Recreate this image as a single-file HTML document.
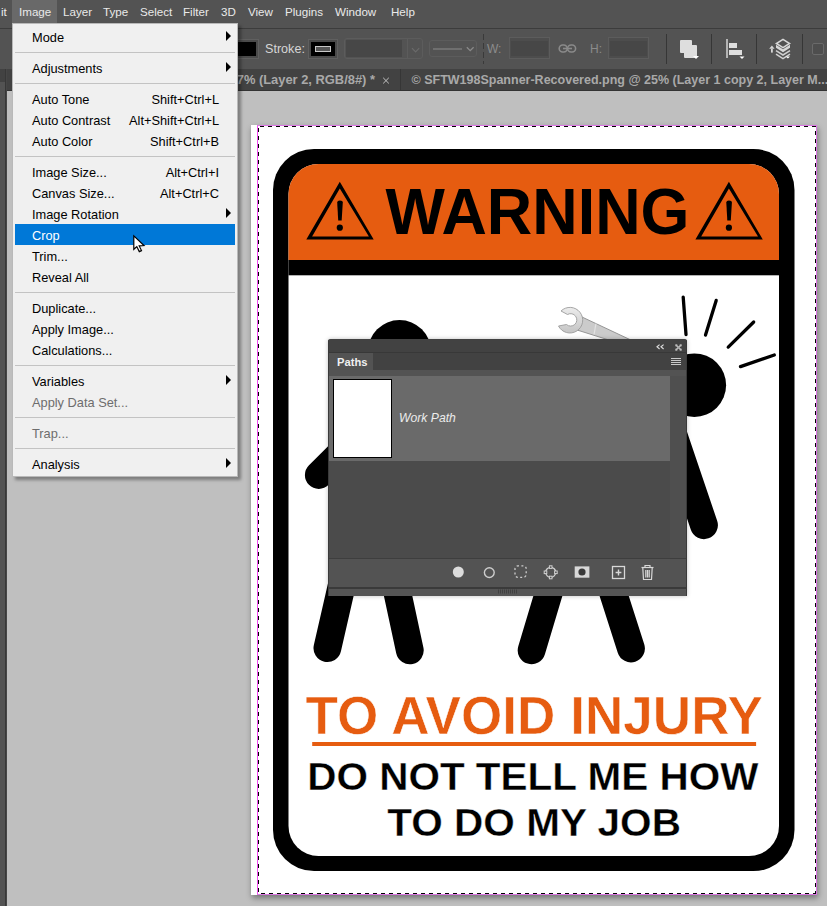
<!DOCTYPE html>
<html><head><meta charset="utf-8">
<style>
*{margin:0;padding:0;box-sizing:border-box}
html,body{width:827px;height:906px;overflow:hidden;background:#bfbfbf;font-family:"Liberation Sans",sans-serif}
.a{position:absolute}
#menubar{left:0;top:0;width:827px;height:28px;background:#535353}
#menubar span{position:absolute;top:5px;font-size:11.6px;color:#eaeaea;line-height:14px;white-space:nowrap}
#mline{left:0;top:28px;width:827px;height:1px;background:#3c3c3c}
#opts{left:0;top:29px;width:827px;height:40px;background:#535353}
#tabs{left:0;top:69px;width:827px;height:22px;background:#424242}
#tabs span{position:absolute;top:4px;font-size:12.5px;font-weight:bold;color:#a9a9a9;white-space:nowrap;line-height:14px}
#lefttool{left:0;top:69px;width:5px;height:837px;background:linear-gradient(#424242 0 13px,#535353 13px)}
#lefttool2{left:5px;top:69px;width:2px;height:837px;background:linear-gradient(90deg,#383838 0 1px,#474747 1px)}
#menu{left:12px;top:23px;width:226px;height:454px;background:#f0f0f0;border:1px solid #b9b9b9;box-shadow:3px 3px 3px rgba(0,0,0,0.35)}
.mi{position:absolute;left:19px;font-size:12.8px;color:#000;line-height:15px;white-space:nowrap}
.sc{position:absolute;right:18px;font-size:12.8px;color:#000;line-height:15px;white-space:nowrap}
.dis{color:#6d6d6d}
.sep{position:absolute;left:2px;width:220px;height:1px;background:#c3c3c3}
.arr{position:absolute;left:213px;width:0;height:0;border-left:5px solid #000;border-top:5px solid transparent;border-bottom:5px solid transparent}
</style></head><body>

<div class="a" style="left:251px;top:125px;width:566px;height:770px;background:#fff;box-shadow:1px 3px 6px rgba(0,0,0,0.4)"></div>
<svg class="a" style="left:0;top:0" width="827" height="906" viewBox="0 0 827 906">
  <defs>
    <linearGradient id="wr" x1="0" y1="0" x2="0" y2="1">
      <stop offset="0" stop-color="#ececec"/><stop offset="1" stop-color="#c4c4c4"/>
    </linearGradient>
  </defs>
  <!-- sign frame -->
  <rect x="273" y="149" width="521.5" height="722" rx="41" fill="#000"/>
  <rect x="288.5" y="164" width="490.5" height="692" rx="30" fill="#fff"/>
  <path d="M288.5 260 V194 A30 30 0 0 1 318.5 164 H749 A30 30 0 0 1 779 194 V260 Z" fill="#e65c10"/>
  <rect x="288.5" y="260" width="490.5" height="15.3" fill="#000"/>
  <!-- triangles -->
  <g id="tri">
    <path d="M339.8 181.8 L373.7 239.6 L306.3 239.6 Z M339.8 188.5 L312.1 236.4 L368.9 236.4 Z" fill="#000" fill-rule="evenodd"/>
    <path d="M337.2 202.6 Q337.2 200.6 339.8 200.6 Q342.8 200.6 342.8 202.6 L341.7 220.5 L338.2 220.5 Z" fill="#000"/>
    <circle cx="339.8" cy="227.7" r="3.1" fill="#000"/>
  </g>
  <use href="#tri" x="389.1"/>
  <g font-family="Liberation Sans" font-weight="bold">
<text transform="translate(385.50,233.80) scale(0.9812,1)" font-size="64.10" fill="#000">WARNING</text>
<text transform="translate(305.60,734.40) scale(0.9905,1)" font-size="53.63" fill="#e65c10" stroke="#fff" stroke-width="0.55">TO AVOID INJURY</text>
<text transform="translate(307.20,789.90) scale(1.0243,1)" font-size="39.53" fill="#000" stroke="#fff" stroke-width="0.35">DO NOT TELL ME HOW</text>
<text transform="translate(387.20,836.20) scale(1.0263,1)" font-size="39.53" fill="#000" stroke="#fff" stroke-width="0.35">TO DO MY JOB</text>
  </g>
  <rect x="312.2" y="742" width="443.9" height="4" fill="#e65c10"/>
  <!-- figures -->
  <g stroke="#000" stroke-linecap="round" stroke-width="27.8" fill="none">
    <path d="M318.8 475 L372 422"/>
    <path d="M369.7 463.5 L327.4 648.1 M369.7 463.5 L409.8 650.4"/>
    <path d="M672.9 433.5 L704 525.2"/>
    <path d="M579.9 489 L531.6 650.3 M579.9 489 L631 648.5"/>
    <path d="M399.6 380 V470"/>
  </g>
  <circle cx="399.5" cy="351.6" r="31.6" fill="#000"/>
  <circle cx="694.3" cy="385.2" r="31.8" fill="#000"/>
  <g stroke="#000" stroke-width="3.3" stroke-linecap="round">
    <path d="M683.2 297.2 L686 334.5"/>
    <path d="M716.2 300.4 L705.5 335.1"/>
    <path d="M753.7 322 L728.2 347.1"/>
    <path d="M774.3 355 L740.5 366.6"/>
  </g>
  <!-- wrench -->
  <g>
    <path d="M582 317 L633 341 L612 341 L578 330.3 Z" fill="#cbcbcb" stroke="#8c8c8c" stroke-width="0.9"/>
    <path d="M596 323.5 L594 334.5" stroke="#e2e2e2" stroke-width="1.2"/>
    <path d="M561 311 A12.8 12.8 0 1 1 558.5 326 L566.5 324.5 A6.2 6.2 0 1 0 567.5 314.5 Z" fill="url(#wr)" stroke="#9c9c9c" stroke-width="0.9"/>
  </g>
  <!-- dashed selection -->
  <g shape-rendering="crispEdges">
    <rect x="257" y="125" width="1" height="770" fill="#f050f0"/>
    <rect x="257" y="125" width="560" height="1" fill="#dc78e4"/>
    <rect x="816" y="125" width="1" height="770" fill="#dc78e4"/>
    <rect x="257" y="894" width="560" height="1" fill="#dc78e4"/>
    <path d="M260 126.5 H816" stroke="#000" stroke-width="1" stroke-dasharray="4 4"/>
    <path d="M258.5 128 V894" stroke="#000" stroke-width="1" stroke-dasharray="4 4"/>
    <path d="M815.5 131 V894" stroke="#000" stroke-width="1" stroke-dasharray="4 4"/>
    <path d="M261 893.5 H816" stroke="#000" stroke-width="1" stroke-dasharray="4 4"/>
  </g>
</svg>


<div id="panel" class="a" style="left:328px;top:339px;width:359px;height:257px;background:#535353;border-radius:3px 3px 0 0;box-shadow:0 0 4px rgba(0,0,0,0.25);overflow:hidden">
  <div class="a" style="left:0;top:0;width:359px;height:13px;background:#424242"></div>
  <div class="a" style="left:0;top:13px;width:359px;height:1px;background:#383838"></div>
  <div class="a" style="left:0;top:14px;width:359px;height:17px;background:#424242"></div>
  <div class="a" style="left:0;top:14px;width:45px;height:23px;background:#535353"></div>
  <div class="a" style="left:9px;top:17px;font-size:11.2px;font-weight:bold;color:#f0f0f0;line-height:13px">Paths</div>
  <svg class="a" style="left:327.5px;top:4.6px" width="9" height="6"><path d="M3.6 0.6 L1 2.8 L3.6 5 M7.6 0.6 L5 2.8 L7.6 5" stroke="#d8d8d8" stroke-width="1.2" fill="none"/></svg>
  <svg class="a" style="left:346.5px;top:4.5px" width="8" height="8"><path d="M1.2 1.2 L5.8 5.8 M5.8 1.2 L1.2 5.8" stroke="#bdbdbd" stroke-width="1.4"/><rect x="0.3" y="0.3" width="2" height="2" fill="#bdbdbd"/><rect x="4.7" y="0.3" width="2" height="2" fill="#bdbdbd"/><rect x="0.3" y="4.7" width="2" height="2" fill="#bdbdbd"/><rect x="4.7" y="4.7" width="2" height="2" fill="#bdbdbd"/><rect x="2.5" y="2.5" width="2" height="2" fill="#a8a8a8"/></svg>
  <div class="a" style="left:343px;top:19px;width:10px;height:1px;background:#c8c8c8;box-shadow:0 2px 0 #c8c8c8,0 4px 0 #c8c8c8,0 6px 0 #c8c8c8"></div>
  <div class="a" style="left:0;top:37px;width:342px;height:182px;background:#4b4b4b"></div>
  <div class="a" style="left:342px;top:37px;width:17px;height:182px;background:#4f4f4f"></div>
  <div class="a" style="left:1px;top:37px;width:341px;height:85px;background:#6a6a6a"></div>
  <div class="a" style="left:5px;top:40px;width:59px;height:79px;background:#fff;border:1px solid #000"></div>
  <div class="a" style="left:71px;top:72px;font-size:12.2px;font-style:italic;color:#ececec;line-height:14px">Work Path</div>
  <div class="a" style="left:0;top:219px;width:359px;height:1px;background:#3e3e3e"></div>
  <div class="a" style="left:0;top:220px;width:359px;height:28px;background:#535353"></div>
  <div class="a" style="left:0;top:248px;width:359px;height:2px;background:#3a3a3a"></div>
  <div class="a" style="left:0;top:250px;width:359px;height:7px;background:#555555"></div>
  <div class="a" style="left:0;top:0;width:1px;height:257px;background:#3a3a3a"></div>
  <div class="a" style="left:358px;top:0;width:1px;height:257px;background:#3a3a3a"></div>
  <svg class="a" style="left:0;top:220px" width="359" height="37">
    <circle cx="130.3" cy="13" r="5.5" fill="#dcdcdc"/>
    <circle cx="161.3" cy="13.6" r="4.9" fill="none" stroke="#cdcdcd" stroke-width="1.4"/>
    <rect x="187" y="6.8" width="11.2" height="11.6" rx="3" fill="none" stroke="#cdcdcd" stroke-width="1.3" stroke-dasharray="2 2.4" stroke-dashoffset="1"/>
    <g transform="translate(222.7,13.3)" fill="none" stroke="#d0d0d0" stroke-width="1.3">
      <circle r="5"/>
      <g stroke-width="1" fill="#535353">
      <rect x="-6.5" y="-1.3" width="2.6" height="2.6"/>
      <rect x="3.9" y="-1.3" width="2.6" height="2.6"/>
      <rect x="-1.3" y="-6.5" width="2.6" height="2.6"/>
      <rect x="-1.3" y="3.9" width="2.6" height="2.6"/>
      </g>
    </g>
    <rect x="246.7" y="7.4" width="14.7" height="11.3" fill="#d8d8d8"/>
    <circle cx="254" cy="13" r="3.6" fill="#3a3a3a"/>
    <rect x="284.5" y="7.5" width="12" height="12" fill="none" stroke="#d8d8d8" stroke-width="1.3"/>
    <path d="M290.5 10.6 V16.4 M287.6 13.5 H293.4" stroke="#d8d8d8" stroke-width="1.4"/>
    <g fill="none" stroke="#d8d8d8" stroke-width="1.2">
      <path d="M313.5 8.5 H325.5"/>
      <path d="M317 8.5 V6.5 H322 V8.5"/>
      <path d="M314.8 9 L315.5 20.5 H323.5 L324.2 9"/>
      <path d="M317.8 11 V18.5 M319.5 11 V18.5 M321.2 11 V18.5"/>
    </g>
    <path d="M170 32.5 H189" stroke="#404040" stroke-width="4" stroke-dasharray="1 1"/>
  </svg>
</div>

<div id="menubar" class="a">
  <div class="a" style="left:12px;top:0;width:45px;height:23px;background:#696969"></div>
  <span style="left:1px">it</span>
  <span style="left:19px">Image</span>
  <span style="left:63px">Layer</span>
  <span style="left:103px">Type</span>
  <span style="left:140px">Select</span>
  <span style="left:183px">Filter</span>
  <span style="left:221px">3D</span>
  <span style="left:248px">View</span>
  <span style="left:285px">Plugins</span>
  <span style="left:335px">Window</span>
  <span style="left:391px">Help</span>
</div>
<div id="mline" class="a"></div>
<div id="opts" class="a">
  <div class="a" style="left:233px;top:10px;width:26px;height:20px;border:1px solid #5f5f5f;background:#4a4a4a"></div>
  <div class="a" style="left:236px;top:13px;width:20px;height:14px;background:#000"></div>
  <div class="a" style="left:265px;top:13px;font-size:12.6px;color:#d6d6d6;line-height:14px">Stroke:</div>
  <div class="a" style="left:308px;top:10px;width:30px;height:20px;border:1px solid #5f5f5f;background:#4a4a4a"></div>
  <div class="a" style="left:311px;top:13px;width:24px;height:14px;background:#000"></div>
  <div class="a" style="left:315px;top:17px;width:16px;height:6px;border:1px solid #c8c8c8;background:#555"></div>
  <div class="a" style="left:344px;top:9px;width:79px;height:21px;border:1px solid #5c5c5c;border-radius:3px;background:#535353"></div>
  <div class="a" style="left:346px;top:11px;width:56px;height:17px;background:#474747"></div>
  <div class="a" style="left:407px;top:10px;width:1px;height:19px;background:#5c5c5c"></div>
  <svg class="a" style="left:411px;top:18px" width="10" height="7"><path d="M1 1.2 L4.6 4.8 L8.2 1.2" stroke="#6a6a6a" stroke-width="1.2" fill="none"/></svg>
  <div class="a" style="left:429px;top:11px;width:48px;height:17px;border:1px solid #5c5c5c;border-radius:3px;background:#535353"></div>
  <div class="a" style="left:433px;top:19px;width:29px;height:2px;background:#6f6f6f"></div>
  <svg class="a" style="left:466px;top:16.5px" width="9" height="7"><path d="M0.8 1.2 L4.2 4.6 L7.6 1.2" stroke="#8a8a8a" stroke-width="1.3" fill="none"/></svg>
  <div class="a" style="left:483px;top:5px;width:1px;height:30px;background:repeating-linear-gradient(#3a3a3a 0 6px,transparent 6px 9px)"></div>
  <div class="a" style="left:487px;top:13px;font-size:12px;color:#8c8c8c;line-height:14px">W:</div>
  <div class="a" style="left:509px;top:8px;width:41px;height:22px;border:1px solid #5c5c5c;background:#4d4d4d"></div>
  <div class="a" style="left:511px;top:12px;width:37px;height:15px;background:#474747"></div>
  <svg class="a" style="left:558px;top:14px" width="20" height="12"><rect x="1.2" y="2" width="8" height="7" rx="3.5" stroke="#8a8a8a" stroke-width="1.6" fill="none"/><rect x="9.6" y="2" width="8" height="7" rx="3.5" stroke="#8a8a8a" stroke-width="1.6" fill="none"/><path d="M5 5.5 H14" stroke="#8a8a8a" stroke-width="1.6"/></svg>
  <div class="a" style="left:590px;top:13px;font-size:12px;color:#8c8c8c;line-height:14px">H:</div>
  <div class="a" style="left:608px;top:8px;width:41px;height:22px;border:1px solid #5c5c5c;background:#4d4d4d"></div>
  <div class="a" style="left:610px;top:12px;width:37px;height:15px;background:#474747"></div>
  <div class="a" style="left:666px;top:5px;width:1px;height:30px;background:#363636"></div>
  <div class="a" style="left:680px;top:11px;width:12px;height:13px;background:#dedede;border-radius:1px"></div>
  <div class="a" style="left:684px;top:16px;width:13px;height:13px;background:#dedede;border-radius:1px"></div>
  <svg class="a" style="left:692px;top:26px" width="8" height="5"><path d="M1 1 H7 L4 4 Z" fill="#fff"/></svg>
  <div class="a" style="left:711px;top:5px;width:1px;height:30px;background:#363636"></div>
  <div class="a" style="left:726px;top:10px;width:2px;height:19px;background:#b4b4b4"></div>
  <div class="a" style="left:729px;top:14px;width:8px;height:5px;background:#dedede"></div>
  <div class="a" style="left:729px;top:21px;width:13px;height:5px;background:#dedede"></div>
  <svg class="a" style="left:738.5px;top:26.5px" width="6" height="4"><path d="M0.5 0.5 H5.5 L3 3 Z" fill="#fff"/></svg>
  <div class="a" style="left:756px;top:5px;width:1px;height:30px;background:#363636"></div>
  <svg class="a" style="left:766px;top:8px" width="30" height="26">
    <path d="M3.2 11.8 L5.9 8.4 L8.6 11.8 Z" fill="#d6d6d6"/>
    <rect x="5" y="11.8" width="1.8" height="3.8" fill="#d6d6d6"/>
    <path d="M17 2.3 L23.6 6.5 L17 10.7 L10.4 6.5 Z" fill="none" stroke="#d8d8d8" stroke-width="1.5"/>
    <path d="M10 7.8 L17 12.2 L24 7.8 L24 10.8 L17 15.2 L10 10.8 Z" fill="#d8d8d8"/>
    <path d="M10 13.6 L17 18 L24 13.6" stroke="#d0d0d0" stroke-width="1.5" fill="none"/>
    <path d="M10 17.2 L17 21.6 L24 17.2" stroke="#d0d0d0" stroke-width="1.5" fill="none"/>
    <path d="M19.8 19.6 H24 L21.9 21.6 Z" fill="#fff"/>
  </svg>
  <div class="a" style="left:802px;top:5px;width:1px;height:30px;background:#363636"></div>
  <div class="a" style="left:812px;top:14px;width:12px;height:12px;border:1px solid #6a6a6a;border-radius:2px;background:#4e4e4e"></div>
</div>
<div id="tabs" class="a">
  <span style="right:452px;font-size:12.9px">7% (Layer 2, RGB/8#) *</span>
  <svg class="a" style="left:382px;top:8px" width="8" height="7"><path d="M1.2 0.8 L6.8 6.4 M6.8 0.8 L1.2 6.4" stroke="#c4c4c4" stroke-width="1"/></svg>
  <div class="a" style="left:400px;top:0;width:1px;height:21px;background:#363636"></div>
  <span style="left:411.5px">© SFTW198Spanner-Recovered.png @ 25% (Layer 1 copy 2, Layer M...</span>
  <div class="a" style="left:0;top:21px;width:827px;height:1px;background:#333"></div>
</div>
<div id="lefttool" class="a"></div>
<div id="lefttool2" class="a"></div>

<div id="menu" class="a">
<div class="mi" style="top:6px">Mode</div>
<div class="arr" style="top:7px"></div>
<div class="sep" style="top:28px"></div>
<div class="mi" style="top:37px">Adjustments</div>
<div class="arr" style="top:38px"></div>
<div class="sep" style="top:59px"></div>
<div class="mi" style="top:68px">Auto Tone</div>
<div class="sc" style="top:68px">Shift+Ctrl+L</div>
<div class="mi" style="top:89px">Auto Contrast</div>
<div class="sc" style="top:89px">Alt+Shift+Ctrl+L</div>
<div class="mi" style="top:110px">Auto Color</div>
<div class="sc" style="top:110px">Shift+Ctrl+B</div>
<div class="sep" style="top:132px"></div>
<div class="mi" style="top:141px">Image Size...</div>
<div class="sc" style="top:141px">Alt+Ctrl+I</div>
<div class="mi" style="top:162px">Canvas Size...</div>
<div class="sc" style="top:162px">Alt+Ctrl+C</div>
<div class="mi" style="top:183px">Image Rotation</div>
<div class="arr" style="top:184px"></div>
<div class="a" style="left:2px;top:200px;width:220px;height:21px;background:#0078d7"></div>
<div class="mi" style="top:204px;color:#fff">Crop</div>
<div class="mi" style="top:225px">Trim...</div>
<div class="mi" style="top:246px">Reveal All</div>
<div class="sep" style="top:268px"></div>
<div class="mi" style="top:277px">Duplicate...</div>
<div class="mi" style="top:298px">Apply Image...</div>
<div class="mi" style="top:319px">Calculations...</div>
<div class="sep" style="top:341px"></div>
<div class="mi" style="top:350px">Variables</div>
<div class="arr" style="top:351px"></div>
<div class="mi dis" style="top:371px">Apply Data Set...</div>
<div class="sep" style="top:393px"></div>
<div class="mi dis" style="top:402px">Trap...</div>
<div class="sep" style="top:424px"></div>
<div class="mi" style="top:433px">Analysis</div>
<div class="arr" style="top:434px"></div>
</div>
<svg class="a" style="left:0;top:0" width="827" height="906"><path d="M133.8 235.8 L133.8 249.3 L136.8 246.6 L139.3 251.6 L141.5 250.6 L139.2 245.9 L144 245.6 Z" fill="#fff" stroke="#000" stroke-width="1.2" stroke-linejoin="miter"/></svg>
</body></html>
